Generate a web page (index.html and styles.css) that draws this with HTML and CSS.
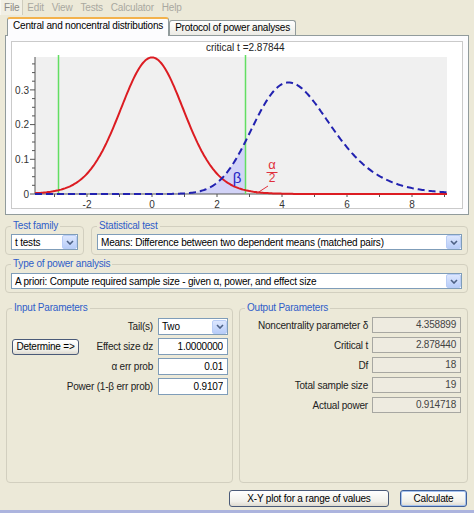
FILE: index.html
```html
<!DOCTYPE html>
<html lang="en">
<head>
  <meta charset="UTF-8" />
  <meta name="viewport" content="width=device-width, initial-scale=1.0" />
  <title>G*Power</title>
  <link rel="stylesheet" href="styles.css">
</head>
<body>

  <div class="menubar">
    <span class="menu menu-file">File</span>
    <span class="menu">Edit</span>
    <span class="menu">View</span>
    <span class="menu">Tests</span>
    <span class="menu">Calculator</span>
    <span class="menu">Help</span>
  </div>

  <div class="tabs">
    <div class="tab active">Central and noncentral distributions</div>
    <div class="tab">Protocol of power analyses</div>
  </div>

  <div class="tabpane">
    <div class="canvas">
      <svg id="plot" width="450" height="166" viewBox="12 42 450 166">
        <rect x="35" y="57" width="412" height="137" fill="#f0f0f0"/>
        <path id="betaArea" fill="#d2d3f7"/>

        <g stroke="#555" stroke-width="1" fill="none">
          <path d="M35 57V194H447"/>
          <path d="M30 194H35M30 159.3H35M30 124.6H35M30 89.9H35"/>
          <path d="M32 185.3H35M32 176.7H35M32 168H35M32 150.6H35M32 142H35M32 133.3H35M32 115.9H35M32 107.3H35M32 98.6H35M32 81.2H35M32 72.6H35M32 63.9H35"/>
          <path d="M54.5 194v3M87 194v3M119.5 194v3M152 194v3M184.5 194v3M217 194v3M249.5 194v3M282 194v3M314.5 194v3M347 194v3M379.5 194v3M412 194v3M444.5 194v3"/>
        </g>

        <g class="ticks">
          <text x="29" y="93.5" text-anchor="end">0.3</text>
          <text x="29" y="128" text-anchor="end">0.2</text>
          <text x="29" y="163" text-anchor="end">0.1</text>
          <text x="29" y="197.5" text-anchor="end">0</text>
          <text x="87" y="207.5" text-anchor="middle">-2</text>
          <text x="152" y="207.5" text-anchor="middle">0</text>
          <text x="217" y="207.5" text-anchor="middle">2</text>
          <text x="282" y="207.5" text-anchor="middle">4</text>
          <text x="347" y="207.5" text-anchor="middle">6</text>
          <text x="412" y="207.5" text-anchor="middle">8</text>
        </g>

        <!-- critical t on both sides -->
        <path d="M58.5 55V194M245.5 55V194" stroke="#62de62" stroke-width="1.5"/>

        <path id="centralCurve" fill="none" stroke="#dc1c22" stroke-width="2"/>
        <path id="noncentralCurve" fill="none" stroke="#2222b0" stroke-width="2" stroke-dasharray="7 4"/>

        <text class="crit-label" x="206" y="50.5">critical t =2.87844</text>

        <text class="beta" x="237" y="183" text-anchor="middle">β</text>
        <text class="alpha" x="272" y="169" text-anchor="middle">α</text>
        <path d="M266.5 172.5H277.5M268 186L256.5 193.5" stroke="#e0303a" stroke-width="1"/>
        <text class="alpha half" x="272" y="182" text-anchor="middle">2</text>
      </svg>
    </div>
  </div>

  <div class="row">
    <fieldset class="group family">
      <legend>Test family</legend>
      <div class="combo"><span class="combo-text">t tests</span><span class="combo-btn"><svg width="8" height="5" viewBox="0 0 8 5"><path d="M1 1L4 4L7 1" fill="none" stroke="#4d6185" stroke-width="1.6"/></svg></span></div>
    </fieldset>
    <fieldset class="group grow">
      <legend>Statistical test</legend>
      <div class="combo"><span class="combo-text">Means: Difference between two dependent means (matched pairs)</span><span class="combo-btn"><svg width="8" height="5" viewBox="0 0 8 5"><path d="M1 1L4 4L7 1" fill="none" stroke="#4d6185" stroke-width="1.6"/></svg></span></div>
    </fieldset>
  </div>

  <div class="row row-type">
    <fieldset class="group grow">
      <legend>Type of power analysis</legend>
      <div class="combo"><span class="combo-text">A priori: Compute required sample size - given α, power, and effect size</span><span class="combo-btn"><svg width="8" height="5" viewBox="0 0 8 5"><path d="M1 1L4 4L7 1" fill="none" stroke="#4d6185" stroke-width="1.6"/></svg></span></div>
    </fieldset>
  </div>

  <div class="row row-params">
    <fieldset class="group params input-params">
      <legend>Input Parameters</legend>
      <div class="input-grid">
        <span class="label">Tail(s)</span>
        <div class="combo"><span class="combo-text">Two</span><span class="combo-btn"><svg width="8" height="5" viewBox="0 0 8 5"><path d="M1 1L4 4L7 1" fill="none" stroke="#4d6185" stroke-width="1.6"/></svg></span></div>

        <button class="btn determine">Determine =&gt;</button>
        <span class="label beside-btn">Effect size dz</span>
        <input class="field" type="text" value="1.0000000">

        <span class="label">α err prob</span>
        <input class="field" type="text" value="0.01">

        <span class="label">Power (1-β err prob)</span>
        <input class="field" type="text" value="0.9107">
      </div>
    </fieldset>

    <fieldset class="group params grow">
      <legend>Output Parameters</legend>
      <div class="output-grid">
        <span class="label">Noncentrality parameter δ</span>
        <div class="out">4.358899</div>
        <span class="label">Critical t</span>
        <div class="out">2.878440</div>
        <span class="label">Df</span>
        <div class="out">18</div>
        <span class="label">Total sample size</span>
        <div class="out">19</div>
        <span class="label">Actual power</span>
        <div class="out">0.914718</div>
      </div>
    </fieldset>
  </div>

  <div class="actions">
    <button class="btn xy">X-Y plot for a range of values</button>
    <button class="btn calc">Calculate</button>
  </div>

  <div class="statusbar"></div>

  <script src="script.js"></script>
</body>
</html>
```

FILE: styles.css
```css
* { box-sizing: border-box; }
body {
  font-family: 'Liberation Sans', Arial, sans-serif;
  font-size: 10px;
  letter-spacing: -0.2px;
  background-color: #ece9d8;
  margin: 0;
  padding: 0;
  width: 474px;
  height: 513px;
  overflow: hidden;
  color: #000;
}

/* menu bar, everything but File is disabled */
.menubar { display: flex; height: 15px; align-items: center; }
.menu { padding: 0 4px; color: #a9a8a0; line-height: 15px; }
.menu-file {
  color: #8a8a86;
  padding: 0 3px 0 3px;
  border-left: 1px solid #f8f7f0;
  border-right: 1px solid #cfccbc;
  background: #f1efe4;
}

/* tabs */
.tabs {
  display: flex;
  align-items: flex-end;
  height: 18px;
  margin-top: 2px;
  padding-left: 7px;
}
.tab {
  height: 15px;
  line-height: 14px;
  padding: 0 5px;
  border: 1px solid #919b9c;
  border-bottom: none;
  border-radius: 3px 3px 0 0;
  background: linear-gradient(#ffffff, #ecebe5);
  white-space: nowrap;
}
.tab.active {
  height: 19px;
  margin-bottom: -1px;
  border-top: 2px solid #f3b24c;
  background: #fcfcfe;
  position: relative;
  z-index: 1;
}
.tabpane {
  margin: 0 5px;
  border: 1px solid #919b9c;
  background: #fcfcfe;
  padding: 5px;
}
.canvas { border: 1px solid #cacaca; background: #fff; }
.canvas svg { display: block; }
.ticks text { font-size: 10px; fill: #333; letter-spacing: 0; }
.crit-label { font-size: 10px; fill: #222; letter-spacing: 0; }
.beta { font-size: 15px; fill: #2626c4; }
.alpha { font-size: 13px; fill: #e0303a; }
.alpha.half { font-size: 12px; }

/* group boxes */
.row { display: flex; gap: 7px; margin: 5px 6px 0 5px; }
.row-type { margin-top: 3px; }
.row-params { margin: 9px 6px 0 6px; gap: 6px; }
.group {
  margin: 0;
  padding: 2px 5px 4px;
  border: 1px solid #d2cfbf;
  border-radius: 4px;
  min-width: 0;
}
.group legend {
  padding: 0 2px;
  line-height: 12px;
  color: #2f5dc9;
}
.family { flex: 0 0 79px; }
.grow { flex: 1; }
.row-type .group { padding: 3px 5px 3px; }
.params { height: 181px; padding: 4px 4px 0 5px; }
.input-params { flex: 0 0 227px; }
.row-params .grow { padding: 3px 6px 0 5px; }

/* combo boxes */
.combo {
  display: flex;
  align-items: center;
  height: 16px;
  border: 1px solid #7f9db9;
  background: #fff;
}
.combo-text { flex: 1; padding-left: 3px; white-space: nowrap; overflow: hidden; }
.combo-btn {
  width: 15px;
  height: 14px;
  display: flex;
  align-items: center;
  justify-content: center;
  border: 1px solid #b9cdf6;
  border-radius: 2px;
  background: linear-gradient(#dde7fe, #b8cdf8);
}

/* parameter grids */
.input-grid {
  display: grid;
  grid-template-columns: 67px minmax(0, 1fr) 70px;
  grid-auto-rows: 17px;
  column-gap: 5px;
  row-gap: 3px;
  align-items: center;
}
.label { grid-column: 1 / 3; text-align: right; white-space: nowrap; color: #222; }
.label.beside-btn { grid-column: 2; }
.input-grid .combo { height: 17px; }
.determine { grid-column: 1; grid-row: 2; }
.field {
  height: 17px;
  width: 70px;
  margin: 0;
  border: 1px solid #7f9db9;
  padding: 0 4px;
  font: inherit;
  letter-spacing: inherit;
  text-align: right;
  background: #fff;
  color: #000;
}
.output-grid {
  display: grid;
  grid-template-columns: minmax(0, 1fr) 89px;
  grid-auto-rows: 16px;
  column-gap: 4px;
  row-gap: 4px;
  align-items: center;
}
.output-grid .label { grid-column: 1; }
.out {
  height: 16px;
  line-height: 14px;
  border: 1px solid #a7a7a2;
  background: #eeebe0;
  text-align: right;
  padding-right: 4px;
  color: #444;
}

/* buttons */
.btn {
  height: 17px;
  margin: 0;
  padding: 0 2px;
  border: 1px solid #4a5a78;
  border-radius: 3px;
  background: linear-gradient(#ffffff, #f1f0ea 70%, #dedad0);
  font: inherit;
  letter-spacing: inherit;
  white-space: nowrap;
  color: #000;
}
.determine { height: 16px; }
.actions {
  display: flex;
  justify-content: flex-end;
  gap: 11px;
  margin-top: 7px;
  padding-right: 7px;
}
.xy { width: 160px; }
.calc { width: 67px; box-shadow: inset 0 0 0 1px #a6c2ee; border-color: #3f5f9a; }
.statusbar { height: 3px; margin-top: 3px; background: #acb4de; }
```

FILE: script.js
```js
// t densities for the plot: red = central, blue dashed = noncentral
const DF = 18;
const NCP = 4.358899;
const CRIT = 2.87844;

// plot box in svg units: t = 0 at x 152, density 0 at y 194
const X0 = 152, XSCALE = 32.5, Y0 = 194, YSCALE = 347;
const T_MIN = (35 - X0) / XSCALE;
const T_MAX = (447 - X0) / XSCALE;

function px(t) { return X0 + XSCALE * t; }
function py(d) { return Y0 - YSCALE * d; }

// T = (Z + ncp) / sqrt(V / df), averaged over the chi-square V
function tDensity(t, df, ncp) {
  const vMax = df + 12 * Math.sqrt(2 * df);
  const steps = 600;
  let num = 0, den = 0;
  for (let i = 1; i <= steps; i++) {
    const v = vMax * i / steps;
    const w = Math.exp((df / 2 - 1) * Math.log(v) - v / 2);
    const s = Math.sqrt(v / df);
    const z = t * s - ncp;
    num += w * s * Math.exp(-z * z / 2);
    den += w;
  }
  return num / den / Math.sqrt(2 * Math.PI);
}

function points(ncp, from, to) {
  const pts = [];
  for (let t = from; t < to; t += 0.04) {
    pts.push(px(t).toFixed(1) + ' ' + py(tDensity(t, DF, ncp)).toFixed(1));
  }
  pts.push(px(to).toFixed(1) + ' ' + py(tDensity(to, DF, ncp)).toFixed(1));
  return pts;
}

document.getElementById('centralCurve').setAttribute('d', 'M' + points(0, T_MIN, T_MAX).join(' L'));
document.getElementById('noncentralCurve').setAttribute('d', 'M' + points(NCP, T_MIN, T_MAX).join(' L'));

// beta: noncentral area left of the critical value
const beta = points(NCP, T_MIN, CRIT);
document.getElementById('betaArea').setAttribute('d',
  'M' + px(T_MIN).toFixed(1) + ' ' + Y0 + ' L' + beta.join(' L') + ' L' + px(CRIT).toFixed(1) + ' ' + Y0 + ' Z');
```
